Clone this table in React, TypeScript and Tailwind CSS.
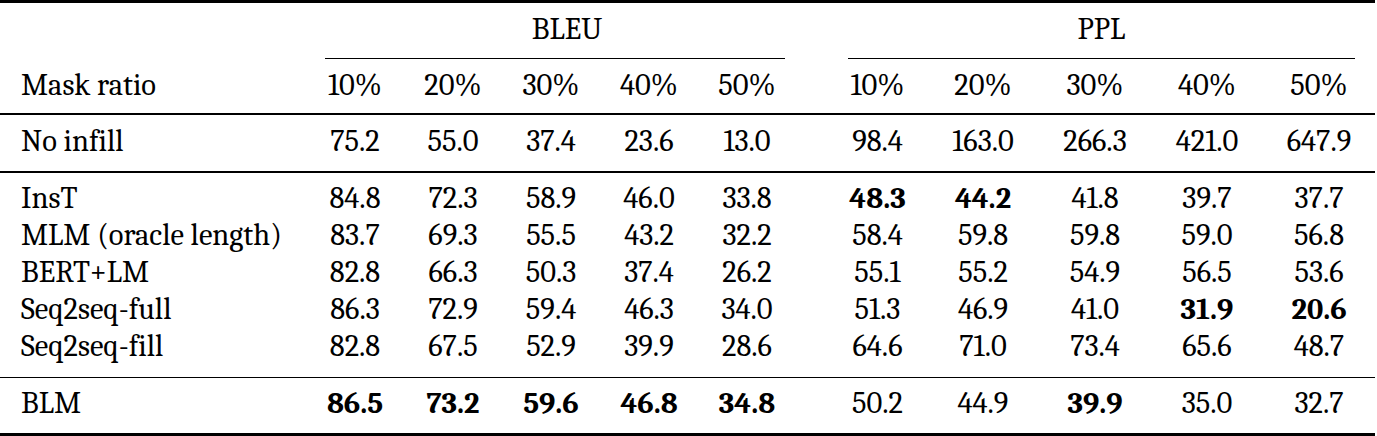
import React from "react";

const GRID =
  "grid grid-cols-[306px_repeat(5,98px)_32px_99px_repeat(4,112px)] text-[30.5px] leading-[37px]";

type Row = { label: string; cells: string[] };

const header: Row = {
  label: "Mask ratio",
  cells: ["10%", "20%", "30%", "40%", "50%", "10%", "20%", "30%", "40%", "50%"],
};

const baseline: Row = {
  label: "No infill",
  cells: ["75.2", "55.0", "37.4", "23.6", "13.0", "98.4", "163.0", "266.3", "421.0", "647.9"],
};

const body: Row[] = [
  { label: "InsT", cells: ["84.8", "72.3", "58.9", "46.0", "33.8", "*48.3", "*44.2", "41.8", "39.7", "37.7"] },
  { label: "MLM (oracle length)", cells: ["83.7", "69.3", "55.5", "43.2", "32.2", "58.4", "59.8", "59.8", "59.0", "56.8"] },
  { label: "BERT+LM", cells: ["82.8", "66.3", "50.3", "37.4", "26.2", "55.1", "55.2", "54.9", "56.5", "53.6"] },
  { label: "Seq2seq-full", cells: ["86.3", "72.9", "59.4", "46.3", "34.0", "51.3", "46.9", "41.0", "*31.9", "*20.6"] },
  { label: "Seq2seq-fill", cells: ["82.8", "67.5", "52.9", "39.9", "28.6", "64.6", "71.0", "73.4", "65.6", "48.7"] },
];

const blm: Row = {
  label: "BLM",
  cells: ["*86.5", "*73.2", "*59.6", "*46.8", "*34.8", "50.2", "44.9", "*39.9", "35.0", "32.7"],
};

function Cell({ v }: { v: string }) {
  const bold = v.startsWith("*");
  const text = bold ? v.slice(1) : v;
  return <div className={bold ? "text-center font-bold" : "text-center"}>{text}</div>;
}

function TableRow({ row, className = "" }: { row: Row; className?: string }) {
  return (
    <div className={`${GRID} ${className}`}>
      <div className="pl-[21px] whitespace-nowrap">{row.label}</div>
      {row.cells.slice(0, 5).map((c, i) => (
        <Cell key={`a${i}`} v={c} />
      ))}
      <div />
      {row.cells.slice(5).map((c, i) => (
        <Cell key={`b${i}`} v={c} />
      ))}
    </div>
  );
}

export default function App() {
  return (
    <div className="w-[1377px] h-[436px] bg-white text-black font-serif overflow-hidden">
      <div className="h-[3px] w-[1375px] bg-black" />
      <div className={`${GRID} mt-[8px]`}>
        <div />
        <div className="col-span-6 text-center">BLEU</div>
        <div className="col-span-5 text-center">PPL</div>
      </div>
      <div className="grid grid-cols-[306px_repeat(5,98px)_32px_99px_repeat(4,112px)] mt-[10px]">
        <div />
        <div className="col-span-5 ml-[19px] mr-[11px] h-px bg-black" />
        <div />
        <div className="col-span-5 ml-[20px] mr-[20px] h-px bg-black" />
      </div>
      <TableRow row={header} className="mt-[8px]" />
      <div className="mt-[9px] h-[1.5px] w-[1375px] bg-black" />
      <TableRow row={baseline} className="mt-[8.5px]" />
      <div className="mt-[11px] h-[1.5px] w-[1375px] bg-black" />
      <div className="mt-[7px] flex flex-col">
        {body.map((r) => (
          <TableRow key={r.label} row={r} />
        ))}
      </div>
      <div className="mt-[12px] h-[1.5px] w-[1375px] bg-black" />
      <TableRow row={blm} className="mt-[6.5px]" />
      <div className="mt-[11.5px] h-[3px] w-[1375px] bg-black" />
    </div>
  );
}
